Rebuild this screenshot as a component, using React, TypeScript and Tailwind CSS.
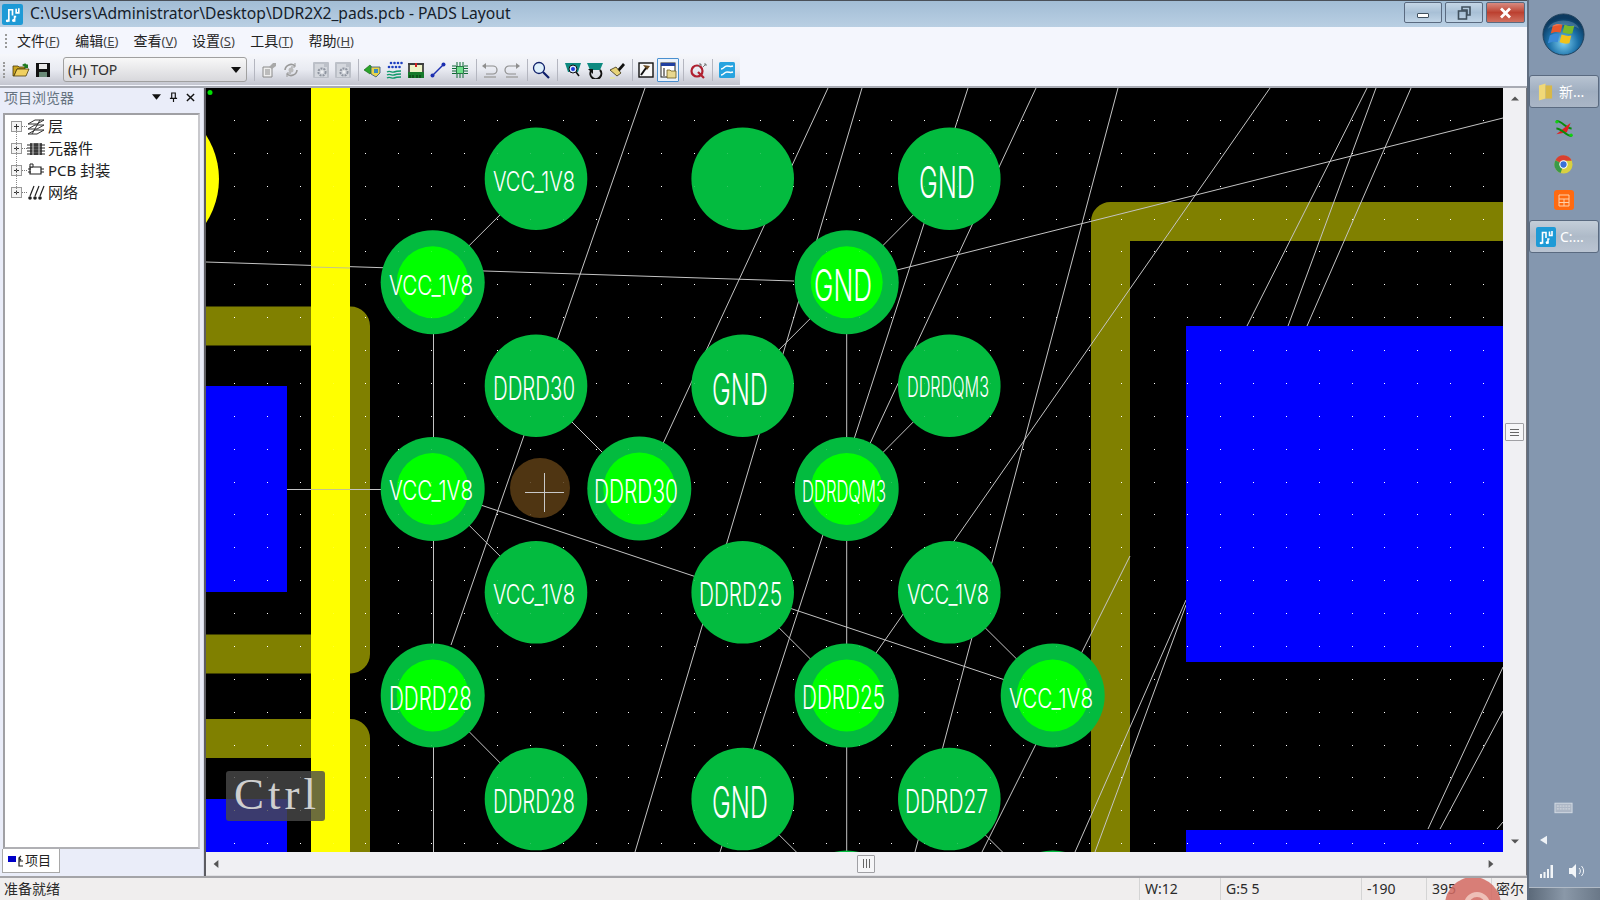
import React from "react";

const DOT: string[] = [];
for (let i = 0; i < 40; i++) {
  for (let j = 0; j < 23; j++) {
    const x = Math.round(234 + 32.87 * i);
    const y = Math.round(120 + 32.87 * j);
    DOT.push(`M${x} ${y}h1v1h-1z`);
  }
}
const dots = DOT.join("");

const LINES: number[][] = [
  [645, 88, 451, 645],
  [828, 88, 660, 450],
  [862, 88, 635, 852],
  [968, 88, 720, 852],
  [1036, 88, 860, 465],
  [1118, 88, 915, 852],
  [1270, 88, 846, 696],
  [897, 270, 1503, 118],
  [206, 262, 794, 281],
  [846.7, 282, 949, 179],
  [846.7, 282, 743, 386],
  [846.7, 282, 846.7, 902],
  [949, 386, 846.7, 489],
  [433.5, 282, 433.5, 902],
  [432.7, 282, 536, 179],
  [287, 489.5, 433, 489.5],
  [536, 386, 639, 489],
  [432.7, 489, 536, 592],
  [432.7, 489, 1053, 696],
  [743, 592, 846.7, 695],
  [949, 592, 1053, 695],
  [432.7, 695, 536, 799],
  [743, 799, 846.7, 902],
  [949, 799, 1053, 902],
  [1130, 556, 982, 852],
  [1186, 600, 1075, 852],
  [1186, 605, 1095, 852],
  [1367, 88, 1247, 326],
  [1376, 88, 1288, 326],
  [1411, 88, 1307, 326],
  [1503, 667, 1428, 829],
  [1503, 711, 1440, 829],
  [1503, 822, 1497, 829],
];

const PADS: number[][] = [
  [536, 178.7], [742.7, 178.7], [949.3, 178.7],
  [536, 385.7], [742.7, 385.7], [949.3, 385.7],
  [536, 592.3], [742.7, 592.3], [949.3, 592.3],
  [536, 799], [742.7, 799], [949.3, 799],
];
const VIAS: number[][] = [
  [432.7, 282.3], [846.7, 282.3],
  [432.7, 489], [639.3, 488.5], [846.7, 489],
  [432.7, 695.5], [846.7, 695.5], [1052.7, 695.5],
  [846.7, 902.5], [1052.7, 902.5],
];

type Label = [string, number, number, number, number];
const LABELS: Label[] = [
  ["VCC_1V8", 493, 82, 191, 27],
  ["GND", 919, 56, 198, 44],
  ["VCC_1V8", 389, 84, 295, 27],
  ["GND", 814, 58, 301, 44],
  ["DDRD30", 493, 82, 400, 32],
  ["GND", 712, 56, 405, 44],
  ["DDRDQM3", 907, 82, 397, 28],
  ["VCC_1V8", 389, 84, 500, 27],
  ["DDRD30", 594, 84, 503, 32],
  ["DDRDQM3", 802, 84, 502, 30],
  ["VCC_1V8", 493, 82, 604, 27],
  ["DDRD25", 699, 83, 606, 32],
  ["VCC_1V8", 907, 82, 604, 27],
  ["DDRD28", 389, 83, 710, 32],
  ["DDRD25", 802, 83, 709, 32],
  ["VCC_1V8", 1009, 84, 708, 27],
  ["DDRD28", 493, 82, 813, 32],
  ["GND", 712, 56, 818, 44],
  ["DDRD27", 905, 83, 813, 32],
];

function Board() {
  return (
    <svg viewBox="206 88 1297 764" className="block h-[764px] w-[1297px] bg-black">
      <path d="M190 326H350.5V654H190" fill="none" stroke="#808000" strokeWidth="39" strokeLinejoin="round" />
      <path d="M190 738.5H350.5V880" fill="none" stroke="#808000" strokeWidth="39" strokeLinejoin="round" />
      <path d="M1110.5 880V221.5H1520" fill="none" stroke="#808000" strokeWidth="39" strokeLinejoin="round" />
      {LINES.map((l, i) => (
        <line key={i} x1={l[0]} y1={l[1]} x2={l[2]} y2={l[3]} stroke="#c4c4c4" strokeWidth="1" />
      ))}
      <rect x="206" y="386" width="81" height="206" fill="#0000ff" />
      <rect x="206" y="799" width="81" height="60" fill="#0000ff" />
      <rect x="1186" y="326" width="317" height="336" fill="#0000ff" />
      <rect x="1186" y="830" width="317" height="30" fill="#0000ff" />
      <path d={dots} fill="#ffffff" />
      <rect x="311" y="88" width="39" height="764" fill="#ffff00" />
      <line x1="311" y1="267" x2="350" y2="268" stroke="#c4c48a" strokeWidth="1" />
      <line x1="311" y1="489.5" x2="350" y2="489.5" stroke="#c4c48a" strokeWidth="1" />
      <circle cx="138" cy="179" r="81" fill="#ffff00" />
      <circle cx="210" cy="92.5" r="2.5" fill="#00e000" />
      {PADS.map((p, i) => (
        <circle key={i} cx={p[0]} cy={p[1]} r="51.3" fill="#03bb3f" />
      ))}
      {VIAS.map((p, i) => (
        <g key={i}>
          <circle cx={p[0]} cy={p[1]} r="52" fill="#03bb3f" />
          <circle cx={p[0]} cy={p[1]} r="36" fill="#00ff00" />
        </g>
      ))}
      <circle cx="540" cy="488" r="30" fill="#4f3512" />
      <path d="M525 492.5H564M544.5 473V512" stroke="#c8c8c8" strokeWidth="1" />
      {LABELS.map((l, i) => (
        <text
          key={i}
          x={l[1]}
          y={l[3]}
          fontSize={l[4]}
          textLength={l[2]}
          lengthAdjust="spacingAndGlyphs"
          fill="#ffffff"
          fontWeight="300"
          className="[font-family:'Inter',sans-serif]"
        >
          {l[0]}
        </text>
      ))}
      <path d={dots} fill="#ffffff" opacity="0.18" />
    </svg>
  );
}

const Ic = ({ children, cls = "" }: { children: React.ReactNode; cls?: string }) => (
  <div className={"flex h-[24px] w-[22px] shrink-0 items-center justify-center " + cls}>
    <svg viewBox="0 0 18 18" className="h-[18px] w-[18px]">
      {children}
    </svg>
  </div>
);

const Tile = ({ className }: { className: string }) => (
  <svg viewBox="0 0 20 20" className={className}>
    <rect width="20" height="20" rx="2" fill="#1e9ad6" />
    <path d="M4 16h2.5V5.5H10V11M10 16h2v-4h1.5M13.5 4.5V8.5H16V4" fill="none" stroke="#fff" strokeWidth="1.6" />
    <circle cx="5" cy="16" r="1.3" fill="#fff" />
    <circle cx="11" cy="15.5" r="1.3" fill="#fff" />
  </svg>
);

const GearTile = () => (
  <Ic>
    <rect x="1" y="1" width="16" height="16" rx="1" fill="#bcc0c8" />
    <path d="M3 3h9v3h3v10H3z" fill="#d4d7dd" />
    <circle cx="10" cy="11" r="3.6" fill="none" stroke="#8f95a0" strokeWidth="2" strokeDasharray="2 1" />
    <circle cx="10" cy="11" r="1.4" fill="#eef0f3" />
  </Ic>
);

function Toolbar() {
  return (
    <div className="flex h-[31px] w-[740px] items-center bg-gradient-to-b from-[#f6f7fb] via-[#e9ebf2] to-[#c4c6d0] pl-[3px]">
      <div className="mr-[5px] h-[16px] w-[2px] border-l-2 border-dotted border-[#9a9a9a]" />
      <Ic>
        <path d="M1 5h5l1 1h6v2H5L2 15H1z" fill="#caa420" stroke="#4b3b08" strokeWidth="0.8" />
        <path d="M5 8h12l-3 7H2z" fill="#f0d060" stroke="#4b3b08" strokeWidth="0.8" />
        <path d="M10 4c2-2 4-2 5 0l1-1v4h-4l1-1c-1-1-2-1-3-2z" fill="#1f7a1f" />
      </Ic>
      <Ic>
        <rect x="2" y="2" width="14" height="14" fill="#111" />
        <rect x="5" y="3" width="8" height="5" fill="#e8e8e8" />
        <rect x="5" y="11" width="8" height="5" fill="#6a8a78" />
      </Ic>
      <div className="ml-[9px] mr-[3px] flex h-[25px] w-[184px] items-center justify-between rounded-[3px] border border-[#a0a0a0] bg-gradient-to-b from-[#f8f8f8] to-[#d8d8dc] px-[4px]">
        <span className="text-[14px] text-[#333]">(H) TOP</span>
        <svg viewBox="0 0 10 6" className="mr-[1px] h-[6px] w-[10px]">
          <path d="M0 0h10L5 6z" fill="#111" />
        </svg>
      </div>
      <div className="ml-[4px] mr-[3px] h-[22px] w-px bg-[#b4b6c0]" />
      <Ic>
        <path d="M3 6h9v10H3z" fill="#eee" stroke="#8a8a8a" strokeWidth="1" />
        <path d="M5 9h5M5 11h5M5 13h5" stroke="#8a8a8a" strokeWidth="1" />
        <path d="M9 6l4-4h3v3l-4 3z" fill="#a8a8a8" />
      </Ic>
      <Ic>
        <path d="M3 9a6 6 0 0 1 10-4M15 9a6 6 0 0 1-10 4" fill="none" stroke="#9a9a9a" strokeWidth="1.6" />
        <circle cx="9" cy="9" r="2.5" fill="#bbb" />
        <path d="M13 2v4h-4M5 16v-4h4" fill="none" stroke="#9a9a9a" strokeWidth="1" />
      </Ic>
      <div className="ml-[8px] flex">
        <GearTile />
        <GearTile />
      </div>
      <div className="ml-[4px] mr-[2px] h-[22px] w-px bg-[#b4b6c0]" />
      <Ic>
        <path d="M1 9l6-5 4 5-4 4z" fill="#2aa52a" stroke="#0c5c0c" strokeWidth="0.6" />
        <path d="M8 6h9v6l-4 4-5-3z" fill="#e8d44a" stroke="#305070" strokeWidth="0.8" />
        <path d="M11 8h4v4h-4z" fill="#3a8ac0" />
      </Ic>
      <Ic>
        <g fill="#1e3fc0">
          <circle cx="6" cy="2" r="1.3" /><circle cx="9.5" cy="2" r="1.3" /><circle cx="13" cy="2" r="1.3" /><circle cx="16.5" cy="2" r="1.3" />
          <circle cx="4" cy="6" r="1.3" /><circle cx="7.5" cy="6" r="1.3" /><circle cx="11" cy="6" r="1.3" /><circle cx="14.5" cy="6" r="1.3" />
        </g>
        <path d="M2 11c3-2 5 1 7 0s4-1 7-1M2 14c3-2 5 1 7 0s4-1 7-1M2 17c3-2 5 1 7 0s4-1 7-1" fill="none" stroke="#0f9a6a" strokeWidth="1.4" />
      </Ic>
      <Ic>
        <path d="M1 3h16" stroke="#111" strokeWidth="1.6" />
        <path d="M2 4h14v7H2z" fill="#eef4c8" />
        <path d="M2 4v8M16 4v8" stroke="#111" strokeWidth="1.4" />
        <path d="M8 2h2v4H8z" fill="#d02020" />
        <rect x="1" y="11" width="16" height="6" fill="#167a2a" />
        <path d="M3 14v3M6 14v3M10 14v3M13 14v3" stroke="#0a3a12" strokeWidth="1.2" />
      </Ic>
      <Ic>
        <path d="M3 15L15 3" stroke="#1c2fb0" strokeWidth="1.4" />
        <circle cx="3.5" cy="14.5" r="2" fill="#1c2fb0" />
        <circle cx="14.5" cy="3.5" r="2" fill="#1c2fb0" />
      </Ic>
      <Ic>
        <rect x="5.5" y="5.5" width="7" height="7" fill="#6fe08a" stroke="#0c5c2c" strokeWidth="0.8" />
        <path d="M1 5h4M1 7.5h4M1 10h4M1 12.5h4M13 5h4M13 7.5h4M13 10h4M13 12.5h4M6 1v4M9 1v4M12 1v4M6 13v4M9 13v4M12 13v4" stroke="#0d6a34" strokeWidth="1" />
      </Ic>
      <div className="ml-[5px] mr-[2px] h-[22px] w-px bg-[#b4b6c0]" />
      <Ic>
        <path d="M4 5h8a4 4 0 0 1 0 8H5" fill="none" stroke="#8e8e8e" strokeWidth="1.2" />
        <path d="M1 5l4-3v6z" fill="#8e8e8e" />
        <path d="M3 16h12" stroke="#a8a8a8" strokeWidth="1.6" />
      </Ic>
      <Ic>
        <path d="M14 5H6a4 4 0 0 0 0 8h7" fill="none" stroke="#8e8e8e" strokeWidth="1.2" />
        <path d="M17 5l-4-3v6z" fill="#8e8e8e" />
        <path d="M3 16h12" stroke="#a8a8a8" strokeWidth="1.6" />
      </Ic>
      <div className="ml-[4px] mr-[2px] h-[22px] w-px bg-[#b4b6c0]" />
      <Ic>
        <circle cx="7" cy="7" r="5.5" fill="#dff0fb" stroke="#10206a" strokeWidth="1.3" />
        <path d="M11 11l6 6" stroke="#10206a" strokeWidth="2.2" />
      </Ic>
      <div className="ml-[5px] mr-[4px] h-[22px] w-px bg-[#b4b6c0]" />
      <Ic>
        <path d="M1 2h16l-3 9H4z" fill="#0d8a80" />
        <circle cx="9" cy="8" r="4" fill="#d8e8ff" stroke="#111" strokeWidth="1" />
        <circle cx="9" cy="8" r="2" fill="#1c38d8" />
        <path d="M12 11l3 4" stroke="#111" strokeWidth="1.6" />
      </Ic>
      <Ic>
        <path d="M1 2h16l-3 7H4z" fill="#0d8a80" />
        <path d="M14 9a5.5 5.5 0 1 1-9 1" fill="none" stroke="#111" strokeWidth="2" />
        <path d="M2 8h5v5z" fill="#111" />
      </Ic>
      <Ic>
        <path d="M9 9l6-7 2 2-6 7z" fill="#111" />
        <path d="M2 9l6-3 5 6-4 3z" fill="#e8d478" stroke="#3a3010" strokeWidth="0.8" />
        <path d="M2 17h5" stroke="#e6e6a0" strokeWidth="1.5" />
      </Ic>
      <div className="ml-[4px] mr-[2px] h-[22px] w-px bg-[#b4b6c0]" />
      <Ic>
        <rect x="2" y="2" width="14" height="14" fill="#f8f8f8" stroke="#111" strokeWidth="1.4" />
        <path d="M6 4l7 1-3 4z" fill="#6a4a20" />
        <path d="M9 7l-5 7" stroke="#111" strokeWidth="2" />
      </Ic>
      <div className="relative flex h-[24px] w-[22px] shrink-0 items-center justify-center rounded-[1px] border border-[#4a90d0] bg-[#eaf2fb]">
        <svg viewBox="0 0 18 18" className="h-[18px] w-[18px]">
          <rect x="2" y="2" width="14" height="14" fill="#fff" stroke="#222" strokeWidth="1" />
          <rect x="2" y="2" width="14" height="3" fill="#1f3fa0" />
          <path d="M4 7h2v8H4z" fill="#888" />
          <path d="M8 9h3l1 1h5v7H8z" fill="#e8d890" stroke="#6a5a20" strokeWidth="0.8" />
        </svg>
      </div>
      <div className="ml-[4px] mr-[3px] h-[22px] w-px bg-[#b4b6c0]" />
      <Ic>
        <circle cx="8" cy="10" r="5.5" fill="none" stroke="#b02030" strokeWidth="2.2" />
        <path d="M9 11l6 6" stroke="#b02030" strokeWidth="2.2" />
        <path d="M9 6l3-3M12 3h-2M12 3v2M14 6l3-3M17 3h-2M17 3v2" stroke="#7a7a7a" strokeWidth="1" fill="none" />
      </Ic>
      <div className="ml-[3px] mr-[3px] h-[22px] w-px bg-[#b4b6c0]" />
      <Ic>
        <rect x="1" y="1" width="16" height="16" rx="1.5" fill="#28a3df" />
        <path d="M3 8c3 0 3-3 6-3s3 1 6 0M3 14c3 0 3-3 6-3s3 1 6 0" fill="none" stroke="#fff" strokeWidth="1.5" />
      </Ic>
    </div>
  );
}

const Plus = () => (
  <svg viewBox="0 0 11 11" className="h-[11px] w-[11px] shrink-0">
    <rect x="0.5" y="0.5" width="10" height="10" fill="#f4f4f4" stroke="#9a9a9a" />
    <path d="M3 5.5h5M5.5 3v5" stroke="#333" strokeWidth="1" />
  </svg>
);

const TreeRow = ({ icon, text }: { icon: React.ReactNode; text: string }) => (
  <div className="flex h-[21.8px] items-center pl-[6px]">
    <Plus />
    <div className="w-[5px] border-t border-dotted border-[#777]" />
    <svg viewBox="0 0 18 16" className="h-[16px] w-[18px] shrink-0">
      {icon}
    </svg>
    <span className="ml-[3px] text-[15px] leading-none text-[#222]">{text}</span>
  </div>
);

function Panel() {
  return (
    <div className="flex w-[204px] shrink-0 flex-col bg-[#eaedf9] border-r border-[#d8dbe8]">
      <div className="flex h-[23px] shrink-0 items-center justify-between pl-[4px] pr-[8px] pb-[5px]">
        <span className="text-[14px] text-[#667380]">项目浏览器</span>
        <div className="flex items-center gap-[8px]">
          <svg viewBox="0 0 10 6" className="h-[6px] w-[9px]"><path d="M0 0h10L5 6z" fill="#111" /></svg>
          <svg viewBox="0 0 10 12" className="h-[11px] w-[9px]"><path d="M3 1h4v6H3zM1 7h8M5 7v4" fill="none" stroke="#111" strokeWidth="1.3" /></svg>
          <svg viewBox="0 0 10 10" className="h-[9px] w-[9px]"><path d="M1 1l8 8M9 1l-8 8" stroke="#111" strokeWidth="1.6" /></svg>
        </div>
      </div>
      <div className="relative mx-[3px] mt-[2px] flex-1 border-2 border-[#a0a0a4] border-r-[#c8c8cc] border-b-[#b0b0b4] bg-white pt-[1px] w-[197px]">
        <div className="absolute left-[11px] top-[14px] h-[66px] border-l border-dotted border-[#888]" />
        <TreeRow
          text="层"
          icon={<path d="M1 5L8 1h9L10 5zM1 10l7-4h9l-7 4zM1 15l7-4h9l-7 4zM13 1L5 15" fill="none" stroke="#333" strokeWidth="1" />}
        />
        <TreeRow
          text="元器件"
          icon={<><rect x="3" y="2" width="12" height="12" fill="#555" /><path d="M0 4h18M0 7h18M0 10h18M0 13h18" stroke="#222" strokeWidth="1" /><path d="M6 1v14M12 1v14" stroke="#fff" strokeWidth="0.8" /></>}
        />
        <TreeRow
          text="PCB 封装"
          icon={<><path d="M3 5h11v7H3z" fill="#fff" stroke="#222" strokeWidth="1.2" /><path d="M1 7h3M1 10h3M14 7h3M14 10h3M3 2h3v3H3z" fill="#fff" stroke="#222" /></>}
        />
        <TreeRow
          text="网络"
          icon={<><path d="M3 12L7 2M8 12l4-10M13 12l4-10" stroke="#222" strokeWidth="1.2" /><circle cx="3" cy="14" r="1.8" fill="#222" /><circle cx="8" cy="14" r="1.8" fill="#222" /><circle cx="13" cy="14" r="1.8" fill="#222" /></>}
        />
      </div>
      <div className="flex h-[27px] shrink-0 items-start pl-[2px]">
        <div className="flex h-[24px] w-[58px] items-center gap-[1px] border border-[#a8a8a8] border-t-0 bg-white pl-[5px]">
          <svg viewBox="0 0 16 12" className="h-[12px] w-[16px] shrink-0">
            <rect x="0" y="1" width="8" height="6" fill="#0000c8" />
            <path d="M11 3v8h4M11 6h4M13 1l-2 2 2 2" fill="none" stroke="#222" strokeWidth="1.2" />
          </svg>
          <span className="text-[13px] leading-none text-[#222]">项目</span>
        </div>
      </div>
    </div>
  );
}

const Tri = ({ d, cls }: { d: string; cls: string }) => (
  <svg viewBox="0 0 10 10" className={cls}>
    <path d={d} fill="#555" />
  </svg>
);

function Taskbar() {
  return (
    <div className="flex w-[73px] shrink-0 flex-col items-stretch border-l-2 border-[#5f6d80] bg-[#8497af]">
      <div className="flex h-[75px] shrink-0 items-center justify-center pb-[7px] pr-[2px]">
        <svg viewBox="0 0 44 44" className="h-[43px] w-[43px]">
          <defs>
            <radialGradient id="orb" cx="50%" cy="70%" r="60%">
              <stop offset="0%" stopColor="#7fd0f0" />
              <stop offset="60%" stopColor="#1a6fa8" />
              <stop offset="100%" stopColor="#0c3a60" />
            </radialGradient>
          </defs>
          <circle cx="22" cy="22" r="21" fill="url(#orb)" stroke="#20405a" strokeWidth="1" />
          <path d="M11 13c3-2 6-2 10-1l-2 8c-3-1-7-1-10 1z" fill="#e8562a" />
          <path d="M23 12c4 1 6 2 10 1l-2 8c-4 1-6 0-10-1z" fill="#7ab82a" />
          <path d="M8 23c3-2 7-2 10-1l-2 8c-3-1-6-1-10 1z" fill="#3a8ad8" />
          <path d="M20 22c4 1 6 2 10 1l-2 8c-4 1-6 0-10-1z" fill="#f2c21a" />
          <path d="M6 16C10 5 34 5 38 16 30 11 14 11 6 16z" fill="#fff" opacity="0.18" />
        </svg>
      </div>
      <div className="flex h-[33px] shrink-0 items-center gap-[6px] rounded-[3px] border border-[#5a6a80] bg-gradient-to-b from-[#b8c4d2] via-[#a0aec0] to-[#aab6c6] pl-[8px] mr-[1px]">
        <svg viewBox="0 0 16 20" className="h-[20px] w-[15px] shrink-0">
          <path d="M1 3l7-2v16l-7 2z" fill="#f0d878" />
          <path d="M8 3h7v14H8z" fill="#d8b848" />
        </svg>
        <span className="text-[14px] leading-none text-white">新...</span>
      </div>
      <div className="flex h-[36px] shrink-0 items-center justify-center mt-[2px] pr-[2px]">
        <svg viewBox="0 0 20 20" className="h-[19px] w-[20px]">
          <path d="M2 2c6 0 10 8 16 8" stroke="#0a8a0a" fill="none" strokeWidth="2" />
          <path d="M2 16l15-12-4 10z" fill="#e02020" />
          <path d="M2 10c6 0 10 8 16 8" stroke="#0a8a0a" fill="none" strokeWidth="2" />
          <circle cx="2.5" cy="3" r="1.8" fill="#10d010" />
          <circle cx="17.5" cy="17" r="1.8" fill="#10d010" />
        </svg>
      </div>
      <div className="flex h-[36px] shrink-0 items-center justify-center pr-[2px]">
        <svg viewBox="0 0 20 20" className="h-[19px] w-[19px]">
          <circle cx="10" cy="10" r="9.5" fill="#d8d040" />
          <path d="M10 10L1.5 5.5A9.5 9.5 0 0 1 18.6 6H10z" fill="#d84030" />
          <path d="M10 10l-8.5-4.5A9.5 9.5 0 0 0 7 19z" fill="#3a9a48" />
          <circle cx="10" cy="10" r="4.4" fill="#fff" />
          <circle cx="10" cy="10" r="3.3" fill="#3a70d8" />
        </svg>
      </div>
      <div className="flex h-[36px] shrink-0 items-center justify-center pr-[2px]">
        <svg viewBox="0 0 20 20" className="h-[20px] w-[20px]">
          <rect width="20" height="20" rx="3" fill="#ff6a10" />
          <path d="M5 5h10v11H5zM5 9h10M5 12.5h10M10 9v7" fill="none" stroke="#ffd0a8" strokeWidth="1" />
        </svg>
      </div>
      <div className="mr-[1px] mt-[2px] flex h-[33px] shrink-0 items-center gap-[4px] rounded-[3px] border border-[#5a6a80] bg-gradient-to-b from-[#c4ced9] via-[#aebac8] to-[#bac4d2] pl-[6px]">
        <Tile className="h-[20px] w-[20px] shrink-0" />
        <span className="text-[14px] leading-none text-white">C:...</span>
      </div>
      <div className="mt-auto flex flex-col items-center">
        <svg viewBox="0 0 20 14" className="mb-[11px] ml-[-3px] h-[14px] w-[19px] opacity-80">
          <rect x="1" y="3" width="18" height="10" fill="#b8c0cc" stroke="#e8ecf2" />
          <path d="M3 6h14M3 9h14" stroke="#f0f0f0" strokeDasharray="2 1" />
        </svg>
        <div className="flex h-[30px] w-full items-center pl-[11px]">
          <svg viewBox="0 0 8 10" className="h-[10px] w-[7px]"><path d="M8 0v10L0 5z" fill="#eef2f6" /></svg>
        </div>
        <div className="flex h-[32px] w-full items-center justify-between pl-[10px] pr-[14px]">
          <svg viewBox="0 0 16 14" className="h-[14px] w-[16px]">
            <path d="M1 10h2v4H1zM4.5 8h2v6h-2zM8 5h2v9H8zM11.5 1h2.5v13h-2.5z" fill="#f2f5f8" />
          </svg>
          <svg viewBox="0 0 18 16" className="h-[16px] w-[18px]">
            <path d="M1 5h3l4-4v14l-4-4H1z" fill="#f2f5f8" />
            <path d="M11 5a4 4 0 0 1 0 6M13.5 3a7 7 0 0 1 0 10" fill="none" stroke="#f2f5f8" strokeWidth="1" />
          </svg>
        </div>
        <div className="h-[13px] w-full border-t border-[#b0bac6] bg-gradient-to-r from-[#5c6a7a] via-[#8a98a8] to-[#6a7888]" />
      </div>
    </div>
  );
}

const Win = ({ cls, children }: { cls: string; children: React.ReactNode }) => (
  <div className={"flex h-[21px] w-[38px] items-center justify-center rounded-[2px] border border-[#5a6a80] " + cls}>
    {children}
  </div>
);

export default function App() {
  return (
    <div className="relative flex h-[900px] w-[1600px] overflow-hidden [font-family:'Noto_Sans','Noto_Sans_CJK_SC',sans-serif]">
      <div className="flex w-[1527px] shrink-0 flex-col bg-[#f4f6fd]">
        <div className="flex h-[27px] shrink-0 items-center border-t border-[#4a5058] bg-gradient-to-b from-[#a2bdd5] to-[#b9cfe3] pl-[2px]">
          <Tile className="h-[21px] w-[21px] shrink-0" />
          <span className="ml-[7px] whitespace-nowrap text-[15.66px] leading-none text-[#15202a]">
            C:\Users\Administrator\Desktop\DDR2X2_pads.pcb - PADS Layout
          </span>
          <div className="ml-auto flex items-start gap-[3px] pr-[2px] pb-[3px]">
            <Win cls="bg-gradient-to-b from-[#c4d6e6] via-[#a8c0d6] to-[#c0d4e6]">
              <div className="mt-[5px] h-[5px] w-[12px] rounded-[1px] border border-[#40505e] bg-white" />
            </Win>
            <Win cls="bg-gradient-to-b from-[#c4d6e6] via-[#a8c0d6] to-[#c0d4e6]">
              <svg viewBox="0 0 14 14" className="h-[14px] w-[14px]">
                <path d="M5 1h8v8h-3V4H5z" fill="none" stroke="#40505e" strokeWidth="1.6" />
                <rect x="1.5" y="5" width="8" height="8" fill="none" stroke="#40505e" strokeWidth="1.6" />
              </svg>
            </Win>
            <Win cls="bg-gradient-to-b from-[#d88a80] via-[#bc4030] to-[#d07060] w-[39px]">
              <svg viewBox="0 0 12 12" className="h-[12px] w-[13px]">
                <path d="M1.5 1.5l9 9M10.5 1.5l-9 9" stroke="#fff" strokeWidth="2.8" />
              </svg>
            </Win>
          </div>
        </div>
        <div className="flex h-[28px] shrink-0 items-center pl-[5px] text-[14px] text-[#222]">
          <div className="mr-[10px] h-[14px] w-[2px] border-l-2 border-dotted border-[#9a9a9a]" />
          {[
            ["文件", "F"],
            ["编辑", "E"],
            ["查看", "V"],
            ["设置", "S"],
            ["工具", "T"],
            ["帮助", "H"],
          ].map((m) => (
            <span key={m[0]} className="w-[58.3px] whitespace-nowrap leading-none">
              {m[0]}
              <span className="text-[13px] text-[#444]">
                (<u>{m[1]}</u>)
              </span>
            </span>
          ))}
        </div>
        <div className="h-[31px] shrink-0 -mt-[1px] mb-[1px]">
          <Toolbar />
        </div>
        <div className="h-[2px] shrink-0 bg-[#a8abb4]" />
        <div className="flex h-[788px] shrink-0">
          <Panel />
          <div className="flex w-[1323px] flex-col border-l-2 border-[#5c5c62]">
            <div className="flex h-[764px] shrink-0">
              <Board />
              <div className="flex w-[24px] flex-col items-center border-r border-[#74747a] bg-[#f0f0f3] py-[7px]">
                <Tri d="M0 7L5 2l5 5z" cls="h-[8px] w-[10px]" />
                <div className="mt-[320px] flex h-[18px] w-[19px] flex-col items-center justify-center gap-[2px] rounded-[1px] border border-[#a0a0a4] bg-[#f6f6f8]">
                  <div className="h-px w-[9px] bg-[#666]" />
                  <div className="h-px w-[9px] bg-[#666]" />
                  <div className="h-px w-[9px] bg-[#666]" />
                </div>
                <Tri d="M0 3h10L5 8z" cls="mt-auto h-[8px] w-[10px]" />
              </div>
            </div>
            <div className="flex h-[24px] shrink-0 items-center border-b border-[#e0e0e4] border-r border-r-[#74747a] bg-[#f0f0f3] pl-[6px] pr-[31px]">
              <Tri d="M8 0v10L2 5z" cls="h-[10px] w-[8px]" />
              <div className="ml-[637px] flex h-[18px] w-[18px] items-center justify-center gap-[2px] rounded-[1px] border border-[#a0a0a4] bg-[#f6f6f8]">
                <div className="h-[9px] w-px bg-[#666]" />
                <div className="h-[9px] w-px bg-[#666]" />
                <div className="h-[9px] w-px bg-[#666]" />
              </div>
              <div className="flex-1" />
              <Tri d="M2 0v10l6-5z" cls="h-[10px] w-[8px]" />
            </div>
          </div>
        </div>
        <div className="relative flex flex-1 items-center overflow-hidden border-t-2 border-[#a4a4a8] bg-[#f0eeee] text-[14px] leading-none text-[#2a2a2a]">
          <span className="w-[1139px] pl-[4px]">准备就绪</span>
          <span className="flex h-full w-[81px] items-center border-l border-[#d4d4d4] pl-[5px]">W:12</span>
          <span className="flex h-full w-[141px] items-center border-l border-[#d4d4d4] pl-[5px]">G:5 5</span>
          <span className="flex h-full w-[65px] items-center border-l border-[#d4d4d4] pl-[5px]">-190</span>
          <span className="flex h-full w-[65px] items-center border-l border-[#d4d4d4] pl-[5px]">395</span>
          <span className="flex h-full flex-1 items-center border-l border-[#d4d4d4] pl-[4px]">密尔</span>
          <div className="absolute left-[1445px] top-[-1px] flex h-[56px] w-[56px] items-center justify-center rounded-full bg-[#d46a62]/85">
            <div className="ml-[8px] h-[26px] w-[26px] rounded-full border-[5px] border-[#eec0b8]" />
          </div>
        </div>
      </div>
      <Taskbar />
      <div className="absolute left-[226px] top-[771px] flex h-[50px] w-[99px] items-center justify-center rounded-[3px] bg-[#4a4a4a]/80 pb-[3px] pl-[3px] text-[45px] leading-none tracking-[4px] text-[#cfcfcf] [font-family:'Liberation_Serif',serif]">
        Ctrl
      </div>
    </div>
  );
}
